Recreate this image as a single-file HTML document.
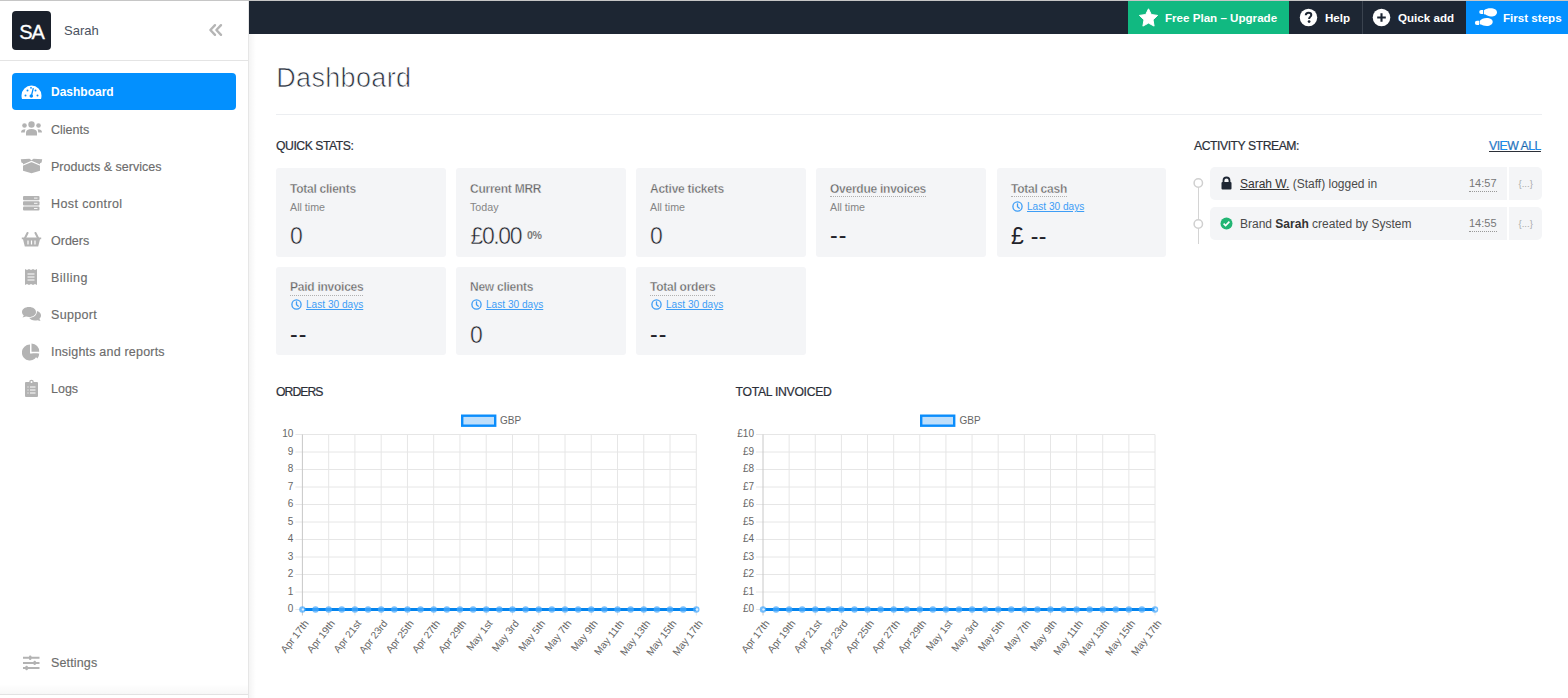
<!DOCTYPE html>
<html><head><meta charset="utf-8">
<style>
*{box-sizing:border-box;margin:0;padding:0}
html,body{width:1568px;height:698px;overflow:hidden;background:#fff;font-family:"Liberation Sans",sans-serif;color:#333}
.abs{position:absolute}
.t{position:absolute;white-space:nowrap;line-height:1}
#topline{position:absolute;left:0;top:0;width:1568px;height:1px;background:#c6c6c6}
#side{position:absolute;left:0;top:1px;width:249px;height:697px;background:#fff;border-right:1px solid #e6e6e6}
#sidebot{position:absolute;left:0;top:684px;width:248px;height:11px;background:linear-gradient(to bottom,rgba(0,0,0,0),rgba(0,0,0,.03));border-bottom:1px solid #e2e2e2}
#shadow{position:absolute;left:249px;top:34px;width:7px;height:664px;background:linear-gradient(to right,rgba(0,0,0,.045),rgba(0,0,0,0))}
#avatar{position:absolute;left:12px;top:11px;width:39px;height:39px;background:#1a202b;border-radius:4px}
.nav{position:absolute;left:12px;width:224px;height:37px}
.nav.active{background:#0390fe;border-radius:4px}
.navt{font-size:12.5px;color:#6c6c6c;-webkit-text-stroke:0.15px #6c6c6c}
.tbt{font-size:11.6px;font-weight:bold;color:#fff;margin-top:-0.5px}
.sec{font-size:12.2px;letter-spacing:-0.45px;color:#2b2f38;-webkit-text-stroke:0.2px #2b2f38}
.card{position:absolute;width:170px;height:88.5px;background:#f4f5f7;border-radius:3px}
.ct{font-size:12px;font-weight:bold;letter-spacing:-0.25px;color:#666;-webkit-text-stroke:0.35px #f4f5f7}
.cs{font-size:10.7px;color:#858585}
.cv{font-size:23px;color:#1f232b;-webkit-text-stroke:0.45px #f4f5f7}
.lnk{font-size:10.1px;color:#3d9df6;text-decoration:underline;margin-top:1px}
.dot{border-bottom:1px dotted #b0b0b0;padding-bottom:1.5px}
.act{position:absolute;left:1210px;width:297px;height:33px;background:#f4f5f7;border-radius:5px 0 0 5px}
.actb{position:absolute;left:1509px;width:33px;height:33px;background:#f4f5f7;border-radius:0 5px 5px 0}
.at{font-size:12px;color:#4a4a4a}
svg text{font-family:"Liberation Sans",sans-serif}
.yl{font-size:10px;fill:#666}
.xl{font-size:10.2px;fill:#666}
.lg{font-size:10px;fill:#666}
</style></head><body>
<div id="topline"></div>
<div id="side"></div>
<div id="sidebot"></div>
<div id="shadow"></div>
<div id="avatar"></div>
<div class="t" style="left:19.3px;top:21.7px;font-size:20px;letter-spacing:-1.2px;color:#fff;-webkit-text-stroke:0.3px #fff">SA</div>
<div class="t" style="left:64px;top:24px;font-size:13px;color:#4a5260">Sarah</div>
<svg class="abs" style="left:207px;top:23px" width="18" height="14" viewBox="0 0 18 14"><path d="M8 2.2L3.4 7L8 11.8M14 2.2L9.4 7L14 11.8" fill="none" stroke="#b5b5b5" stroke-width="2.4" stroke-linecap="round" stroke-linejoin="round"/></svg>
<div class="abs" style="left:0;top:60px;width:248px;height:1px;background:#e4e4e4"></div>

<div class="nav active" style="top:73px"></div>
<svg class="abs" style="left:21px;top:84px" width="21" height="16" viewBox="0 0 21 16"><path d="M1 15C0.6 13.8 0.5 12.6 0.5 11.5A10 10 0 0 1 20.5 11.5C20.5 12.6 20.4 13.8 20 15Z" fill="#fff"/><circle cx="4.5" cy="11.5" r="1" fill="#0390fe"/><circle cx="16.5" cy="11.5" r="1" fill="#0390fe"/><circle cx="6.5" cy="6.5" r="1" fill="#0390fe"/><circle cx="14.5" cy="6.5" r="1" fill="#0390fe"/><circle cx="10" cy="3.8" r="0.9" fill="#0390fe"/><path d="M12.3 4.2L10.6 10.8" stroke="#0390fe" stroke-width="1.3"/><circle cx="10.3" cy="12" r="1.8" fill="#0390fe"/></svg>
<div class="t" style="left:51px;top:86px;font-size:12px;font-weight:bold;color:#fff">Dashboard</div>

<svg class="abs" style="left:20px;top:121px" width="23" height="15" viewBox="0 0 23 15"><circle cx="11.5" cy="3.5" r="3.2" fill="#b3b3b3"/><circle cx="4.5" cy="4.5" r="2.3" fill="#b3b3b3"/><circle cx="18.5" cy="4.5" r="2.3" fill="#b3b3b3"/><path d="M6 14.5V11.5C6 9.3 8 8 11.5 8S17 9.3 17 11.5V14.5Z" fill="#b3b3b3"/><path d="M1 11.5C1 9.5 2.5 8.3 5.5 8.3C5 9.3 4.8 10.2 4.8 11.5Z" fill="#b3b3b3"/><path d="M22 11.5C22 9.5 20.5 8.3 17.5 8.3C18 9.3 18.2 10.2 18.2 11.5Z" fill="#b3b3b3"/></svg>
<div class="t navt" style="left:51px;top:124px">Clients</div>

<svg class="abs" style="left:20px;top:158px" width="23" height="16" viewBox="0 0 23 16"><path d="M0.8 1.2L9.5 0.8L11.5 2.2L13.5 0.8L22.2 1.2L21.6 4.6L20 5.2V12.8L11.5 15.2L3 12.8V5.2L1.4 4.6Z" fill="#b3b3b3"/><path d="M2.6 7.2L11.5 3.4L20.4 7.2" fill="none" stroke="#fff" stroke-width="1.1"/></svg>
<div class="t navt" style="left:51px;top:161px">Products &amp; services</div>

<svg class="abs" style="left:22px;top:195px" width="19" height="17" viewBox="0 0 19 17"><rect x="1" y="1" width="16.5" height="4.2" rx="1" fill="#b3b3b3"/><rect x="1" y="6.2" width="16.5" height="4.2" rx="1" fill="#b3b3b3"/><rect x="1" y="11.4" width="16.5" height="4.2" rx="1" fill="#b3b3b3"/><path d="M12 3.1H15.5M12 8.3H15.5M12 13.5H15.5" stroke="#fff" stroke-width="0.9"/></svg>
<div class="t navt" style="left:51px;top:198px;letter-spacing:0.4px">Host control</div>

<svg class="abs" style="left:21px;top:232px" width="21" height="16" viewBox="0 0 21 16"><path d="M6.5 1L4 6M14.5 1L17 6" stroke="#b3b3b3" stroke-width="2" stroke-linecap="round"/><path d="M0.8 5.5H20.2V7.3H19L17.2 14.5H3.8L2 7.3H0.8Z" fill="#b3b3b3"/><path d="M7 8.5V12.5M10.5 8.5V12.5M14 8.5V12.5" stroke="#fff" stroke-width="1.2"/></svg>
<div class="t navt" style="left:51px;top:235px">Orders</div>

<svg class="abs" style="left:24px;top:268px" width="15" height="18" viewBox="0 0 15 18"><path d="M1 1L3 2L5 1L7 2L9 1L11 2L13 1V17L11 16L9 17L7 16L5 17L3 16L1 17Z" fill="#b3b3b3"/><path d="M3.5 6H10.5M3.5 9H10.5M3.5 12H10.5" stroke="#fff" stroke-width="1.2"/></svg>
<div class="t navt" style="left:51px;top:272px;letter-spacing:0.5px">Billing</div>

<svg class="abs" style="left:21px;top:306px" width="21" height="17" viewBox="0 0 21 17"><path d="M8 1C3.8 1 1 3.2 1 6C1 7.4 1.7 8.5 2.8 9.4L1.5 11.5L5 10.6C5.9 10.9 6.9 11 8 11C12.2 11 15 8.8 15 6S12.2 1 8 1Z" fill="#b3b3b3"/><path d="M16 5C18.6 5.8 20 7.5 20 9.5C20 10.8 19.4 11.9 18.4 12.7L19.5 15L16.4 14.2C15.6 14.4 14.8 14.5 14 14.5C11.2 14.5 9 13.3 8.2 11.8C12.8 11.7 16.1 9.2 16 5Z" fill="#b3b3b3"/></svg>
<div class="t navt" style="left:51px;top:309px;letter-spacing:0.33px">Support</div>

<svg class="abs" style="left:22px;top:343px" width="19" height="18" viewBox="0 0 19 18"><path d="M8 1.5A8 8 0 1 0 15.8 10.6H8Z" fill="#b3b3b3"/><path d="M9.5 0.5A7.8 7.8 0 0 1 17.2 8.8H9.5Z" fill="#b3b3b3"/><path d="M10.2 10.4H17.2A7.5 7.5 0 0 1 15.4 15.5Z" fill="#b3b3b3"/></svg>
<div class="t navt" style="left:51px;top:346px;letter-spacing:0.2px">Insights and reports</div>

<svg class="abs" style="left:24px;top:379px" width="15" height="19" viewBox="0 0 15 19"><path d="M2 3H5.2A2.3 2.3 0 0 1 9.8 3H13A1 1 0 0 1 14 4V17A1 1 0 0 1 13 18H2A1 1 0 0 1 1 17V4A1 1 0 0 1 2 3Z" fill="#b3b3b3"/><circle cx="7.5" cy="3" r="1" fill="#fff"/><path d="M3.5 8H4.5M6 8H11.5M3.5 11H4.5M6 11H11.5M3.5 14H4.5M6 14H11.5" stroke="#fff" stroke-width="1.2"/></svg>
<div class="t navt" style="left:51px;top:383px">Logs</div>

<svg class="abs" style="left:22px;top:655px" width="19" height="16" viewBox="0 0 19 16"><path d="M1 2.7H17.5M1 7.9H17.5M1 13H17.5" stroke="#b3b3b3" stroke-width="2"/><rect x="7" y="0.5" width="2.4" height="4.4" rx="1" fill="#b3b3b3"/><rect x="11.5" y="5.7" width="2.4" height="4.4" rx="1" fill="#b3b3b3"/><rect x="3.4" y="10.8" width="2.4" height="4.4" rx="1" fill="#b3b3b3"/></svg>
<div class="t navt" style="left:51px;top:657px;letter-spacing:0.15px">Settings</div>

<div class="abs" style="left:249px;top:1px;width:1319px;height:33px;background:#1d2633"></div>
<div class="abs" style="left:1128px;top:1px;width:161px;height:33px;background:#11b981"></div>
<svg class="abs" style="left:1138px;top:8px" width="21" height="20" viewBox="0 0 21 20"><path d="M10.5 0.8L13.3 6.5L19.6 7.4L15 11.8L16.1 18.1L10.5 15.1L4.9 18.1L6 11.8L1.4 7.4L7.7 6.5Z" fill="#fff" stroke="#fff" stroke-width="1" stroke-linejoin="round"/></svg>
<div class="t tbt" style="left:1165px;top:12px">Free Plan – Upgrade</div>
<svg class="abs" style="left:1299px;top:8px" width="19" height="19" viewBox="0 0 19 19"><circle cx="9.5" cy="9.5" r="8.7" fill="#fff"/><path d="M6.8 7.3C6.8 5.7 8 4.7 9.6 4.7C11.2 4.7 12.3 5.7 12.3 7C12.3 8.8 10.1 9 10.1 10.9" fill="none" stroke="#1d2633" stroke-width="2"/><circle cx="10.1" cy="13.6" r="1.4" fill="#1d2633"/></svg>
<div class="t tbt" style="left:1325px;top:12px">Help</div>
<div class="abs" style="left:1362px;top:1px;width:1px;height:33px;background:#3a434f"></div>
<svg class="abs" style="left:1372px;top:8px" width="19" height="19" viewBox="0 0 19 19"><circle cx="9.5" cy="9.5" r="8.8" fill="#fff"/><path d="M9.5 5.2V13.8M5.2 9.5H13.8" stroke="#1d2633" stroke-width="2.1"/></svg>
<div class="t tbt" style="left:1398px;top:12px">Quick add</div>
<div class="abs" style="left:1466px;top:1px;width:102px;height:33px;background:#0390fe"></div>
<svg class="abs" style="left:1474px;top:7px" width="24" height="20" viewBox="0 0 24 20"><path d="M9.2 3.1V7.1H7.2A2 2 0 0 1 7.2 3.1Z" fill="#fff"/><path d="M10 3.2C12 1.8 14 1.2 16.5 1.2C20.5 1.2 23 2.8 23 5.2C23 7.8 20.5 9.6 17 9.6C14.5 9.6 13 8.5 11.5 7.6L10 7.3Z" fill="#fff"/><path d="M5 13.8V18H3A2.1 2.1 0 0 1 3 13.8Z" fill="#fff"/><path d="M5.6 14C7.3 12 9.5 10.9 12.5 10.9C16.5 10.9 18.7 12.6 18.7 14.8C18.7 17.3 16.2 19 12.8 19C9.8 19 8.5 18.2 7 17.6L5.6 17.2Z" fill="#fff"/></svg>
<div class="t tbt" style="left:1503px;top:12px">First steps</div>

<div class="t" style="left:276.2px;top:64.9px;font-size:27px;letter-spacing:0.35px;color:#2d3340;-webkit-text-stroke:0.7px #fff">Dashboard</div>
<div class="abs" style="left:276px;top:114px;width:1266px;height:1px;background:#eceef1"></div>
<div class="t sec" style="left:276px;top:139.5px">QUICK STATS:</div>

<div class="card" style="left:276px;top:168px"></div>
<div class="card" style="left:456px;top:168px"></div>
<div class="card" style="left:636px;top:168px"></div>
<div class="card" style="left:816px;top:168px"></div>
<div class="card" style="left:997px;top:168px;width:169px"></div>
<div class="card" style="left:276px;top:266.5px"></div>
<div class="card" style="left:456px;top:266.5px"></div>
<div class="card" style="left:636px;top:266.5px"></div>

<div class="t ct" style="left:290px;top:182.6px">Total clients</div>
<div class="t cs" style="left:290px;top:202px">All time</div>
<div class="t cv" style="left:290px;top:225.2px">0</div>

<div class="t ct" style="left:470px;top:182.6px">Current MRR</div>
<div class="t cs" style="left:470px;top:202px">Today</div>
<div class="t cv" style="left:470.5px;top:225.2px;letter-spacing:-1.4px">£0.00</div>
<div class="t" style="left:527px;top:230px;font-size:10.6px;font-weight:bold;letter-spacing:-0.5px;color:#7a7a7a">0%</div>

<div class="t ct" style="left:650px;top:182.6px">Active tickets</div>
<div class="t cs" style="left:650px;top:202px">All time</div>
<div class="t cv" style="left:650px;top:225.2px">0</div>

<div class="t ct dot" style="left:830px;top:182.6px">Overdue invoices</div>
<div class="t cs" style="left:830px;top:202px">All time</div>
<div class="t cv" style="left:830px;top:223.7px;letter-spacing:1.2px;-webkit-text-stroke:0">--</div>

<div class="t ct dot" style="left:1011px;top:182.6px">Total cash</div>
<svg class="abs" style="left:1011.5px;top:201px" width="11" height="11" viewBox="0 0 11 11"><circle cx="5.5" cy="5.5" r="4.6" fill="none" stroke="#3d9df6" stroke-width="1.3"/><path d="M5.5 2.8V5.7L7.3 7.2" fill="none" stroke="#3d9df6" stroke-width="1.3" stroke-linecap="round"/></svg>
<div class="t lnk" style="left:1027px;top:201px">Last 30 days</div>
<div class="t cv" style="left:1011px;top:225.2px;letter-spacing:0.3px;-webkit-text-stroke:0">£ --</div>

<div class="t ct dot" style="left:290px;top:281.3px">Paid invoices</div>
<svg class="abs" style="left:290.5px;top:299px" width="11" height="11" viewBox="0 0 11 11"><circle cx="5.5" cy="5.5" r="4.6" fill="none" stroke="#3d9df6" stroke-width="1.3"/><path d="M5.5 2.8V5.7L7.3 7.2" fill="none" stroke="#3d9df6" stroke-width="1.3" stroke-linecap="round"/></svg>
<div class="t lnk" style="left:306px;top:299px">Last 30 days</div>
<div class="t cv" style="left:290px;top:323.3px;letter-spacing:1.2px;-webkit-text-stroke:0">--</div>

<div class="t ct" style="left:470px;top:281.3px">New clients</div>
<svg class="abs" style="left:470.5px;top:299px" width="11" height="11" viewBox="0 0 11 11"><circle cx="5.5" cy="5.5" r="4.6" fill="none" stroke="#3d9df6" stroke-width="1.3"/><path d="M5.5 2.8V5.7L7.3 7.2" fill="none" stroke="#3d9df6" stroke-width="1.3" stroke-linecap="round"/></svg>
<div class="t lnk" style="left:486px;top:299px">Last 30 days</div>
<div class="t cv" style="left:470px;top:324.3px">0</div>

<div class="t ct dot" style="left:650px;top:281.3px">Total orders</div>
<svg class="abs" style="left:650.5px;top:299px" width="11" height="11" viewBox="0 0 11 11"><circle cx="5.5" cy="5.5" r="4.6" fill="none" stroke="#3d9df6" stroke-width="1.3"/><path d="M5.5 2.8V5.7L7.3 7.2" fill="none" stroke="#3d9df6" stroke-width="1.3" stroke-linecap="round"/></svg>
<div class="t lnk" style="left:666px;top:299px">Last 30 days</div>
<div class="t cv" style="left:650px;top:323.3px;letter-spacing:1.2px;-webkit-text-stroke:0">--</div>

<div class="t sec" style="left:1194px;top:139.5px">ACTIVITY STREAM:</div>
<div class="t sec" style="left:1489px;top:139.5px;color:#1a8ff5;text-decoration:underline">VIEW ALL</div>
<div class="abs" style="left:1197.5px;top:187px;width:1.5px;height:57px;background:#d4d4d4"></div>
<div class="act" style="top:167px"></div><div class="actb" style="top:167px"></div>
<div class="act" style="top:207px"></div><div class="actb" style="top:207px"></div>
<svg class="abs" style="left:1192px;top:177px" width="13" height="13"><circle cx="6.3" cy="6" r="4.2" fill="#fff" stroke="#d0d0d0" stroke-width="1.5"/></svg>
<svg class="abs" style="left:1192px;top:218px" width="13" height="13"><circle cx="6.3" cy="6" r="4.2" fill="#fff" stroke="#d0d0d0" stroke-width="1.5"/></svg>
<svg class="abs" style="left:1220px;top:176px" width="13" height="14" viewBox="0 0 13 14"><path d="M3.5 6V4.5A3 3 0 0 1 9.5 4.5V6" fill="none" stroke="#1d2633" stroke-width="1.8"/><rect x="1.5" y="6" width="10" height="7.5" rx="1" fill="#1d2633"/></svg>
<div class="t at" style="left:1240px;top:178px"><span style="text-decoration:underline;color:#333">Sarah W.</span> (Staff) logged in</div>
<div class="t at" style="left:1469px;top:178px;font-size:11px;color:#777;border-bottom:1px dotted #999;padding-bottom:2px">14:57</div>
<div class="t" style="left:1518.5px;top:178.5px;font-size:9.6px;color:#ababab">{...}</div>
<svg class="abs" style="left:1220px;top:217px" width="13" height="13" viewBox="0 0 13 13"><circle cx="6.5" cy="6.5" r="6" fill="#22b573"/><path d="M3.6 6.6L5.6 8.6L9.4 4.6" fill="none" stroke="#fff" stroke-width="1.6"/></svg>
<div class="t at" style="left:1240px;top:218px">Brand <b style="color:#333">Sarah</b> created by System</div>
<div class="t at" style="left:1469px;top:218px;font-size:11px;color:#777;border-bottom:1px dotted #999;padding-bottom:2px">14:55</div>
<div class="t" style="left:1518.5px;top:218.5px;font-size:9.6px;color:#ababab">{...}</div>

<div class="t sec" style="left:276px;top:386px;letter-spacing:-0.95px">ORDERS</div>
<div class="t sec" style="left:735.5px;top:386px;letter-spacing:-0.28px">TOTAL INVOICED</div>
<svg class="abs" style="left:0;top:0" width="1568" height="698">
<line x1="295.40" y1="434.50" x2="696.30" y2="434.50" stroke="#e6e6e6" stroke-width="1"/>
<line x1="295.40" y1="452.00" x2="696.30" y2="452.00" stroke="#e6e6e6" stroke-width="1"/>
<line x1="295.40" y1="469.50" x2="696.30" y2="469.50" stroke="#e6e6e6" stroke-width="1"/>
<line x1="295.40" y1="487.00" x2="696.30" y2="487.00" stroke="#e6e6e6" stroke-width="1"/>
<line x1="295.40" y1="504.50" x2="696.30" y2="504.50" stroke="#e6e6e6" stroke-width="1"/>
<line x1="295.40" y1="522.00" x2="696.30" y2="522.00" stroke="#e6e6e6" stroke-width="1"/>
<line x1="295.40" y1="539.50" x2="696.30" y2="539.50" stroke="#e6e6e6" stroke-width="1"/>
<line x1="295.40" y1="557.00" x2="696.30" y2="557.00" stroke="#e6e6e6" stroke-width="1"/>
<line x1="295.40" y1="574.50" x2="696.30" y2="574.50" stroke="#e6e6e6" stroke-width="1"/>
<line x1="295.40" y1="592.00" x2="696.30" y2="592.00" stroke="#e6e6e6" stroke-width="1"/>
<line x1="295.40" y1="609.50" x2="696.30" y2="609.50" stroke="#e6e6e6" stroke-width="1"/>
<line x1="302.40" y1="434.50" x2="302.40" y2="615.50" stroke="#c8c8c8" stroke-width="1"/>
<line x1="328.66" y1="434.50" x2="328.66" y2="615.50" stroke="#e6e6e6" stroke-width="1"/>
<line x1="354.92" y1="434.50" x2="354.92" y2="615.50" stroke="#e6e6e6" stroke-width="1"/>
<line x1="381.18" y1="434.50" x2="381.18" y2="615.50" stroke="#e6e6e6" stroke-width="1"/>
<line x1="407.44" y1="434.50" x2="407.44" y2="615.50" stroke="#e6e6e6" stroke-width="1"/>
<line x1="433.70" y1="434.50" x2="433.70" y2="615.50" stroke="#e6e6e6" stroke-width="1"/>
<line x1="459.96" y1="434.50" x2="459.96" y2="615.50" stroke="#e6e6e6" stroke-width="1"/>
<line x1="486.22" y1="434.50" x2="486.22" y2="615.50" stroke="#e6e6e6" stroke-width="1"/>
<line x1="512.48" y1="434.50" x2="512.48" y2="615.50" stroke="#e6e6e6" stroke-width="1"/>
<line x1="538.74" y1="434.50" x2="538.74" y2="615.50" stroke="#e6e6e6" stroke-width="1"/>
<line x1="565.00" y1="434.50" x2="565.00" y2="615.50" stroke="#e6e6e6" stroke-width="1"/>
<line x1="591.26" y1="434.50" x2="591.26" y2="615.50" stroke="#e6e6e6" stroke-width="1"/>
<line x1="617.52" y1="434.50" x2="617.52" y2="615.50" stroke="#e6e6e6" stroke-width="1"/>
<line x1="643.78" y1="434.50" x2="643.78" y2="615.50" stroke="#e6e6e6" stroke-width="1"/>
<line x1="670.04" y1="434.50" x2="670.04" y2="615.50" stroke="#e6e6e6" stroke-width="1"/>
<line x1="696.30" y1="434.50" x2="696.30" y2="615.50" stroke="#e6e6e6" stroke-width="1"/>
<text x="293.40" y="437.20" text-anchor="end" class="yl">10</text>
<text x="293.40" y="454.70" text-anchor="end" class="yl">9</text>
<text x="293.40" y="472.20" text-anchor="end" class="yl">8</text>
<text x="293.40" y="489.70" text-anchor="end" class="yl">7</text>
<text x="293.40" y="507.20" text-anchor="end" class="yl">6</text>
<text x="293.40" y="524.70" text-anchor="end" class="yl">5</text>
<text x="293.40" y="542.20" text-anchor="end" class="yl">4</text>
<text x="293.40" y="559.70" text-anchor="end" class="yl">3</text>
<text x="293.40" y="577.20" text-anchor="end" class="yl">2</text>
<text x="293.40" y="594.70" text-anchor="end" class="yl">1</text>
<text x="293.40" y="612.20" text-anchor="end" class="yl">0</text>
<line x1="302.40" y1="609.50" x2="696.30" y2="609.50" stroke="#0384ee" stroke-width="2.8"/>
<circle cx="302.40" cy="609.50" r="3.2" fill="#4aa9fc" fill-opacity="0.75"/>
<circle cx="303.00" cy="609.50" r="1.3" fill="#dff0ff"/>
<circle cx="315.53" cy="609.50" r="3.2" fill="#4aa9fc" fill-opacity="0.75"/>
<circle cx="328.66" cy="609.50" r="3.2" fill="#4aa9fc" fill-opacity="0.75"/>
<circle cx="341.79" cy="609.50" r="3.2" fill="#4aa9fc" fill-opacity="0.75"/>
<circle cx="354.92" cy="609.50" r="3.2" fill="#4aa9fc" fill-opacity="0.75"/>
<circle cx="368.05" cy="609.50" r="3.2" fill="#4aa9fc" fill-opacity="0.75"/>
<circle cx="381.18" cy="609.50" r="3.2" fill="#4aa9fc" fill-opacity="0.75"/>
<circle cx="394.31" cy="609.50" r="3.2" fill="#4aa9fc" fill-opacity="0.75"/>
<circle cx="407.44" cy="609.50" r="3.2" fill="#4aa9fc" fill-opacity="0.75"/>
<circle cx="420.57" cy="609.50" r="3.2" fill="#4aa9fc" fill-opacity="0.75"/>
<circle cx="433.70" cy="609.50" r="3.2" fill="#4aa9fc" fill-opacity="0.75"/>
<circle cx="446.83" cy="609.50" r="3.2" fill="#4aa9fc" fill-opacity="0.75"/>
<circle cx="459.96" cy="609.50" r="3.2" fill="#4aa9fc" fill-opacity="0.75"/>
<circle cx="473.09" cy="609.50" r="3.2" fill="#4aa9fc" fill-opacity="0.75"/>
<circle cx="486.22" cy="609.50" r="3.2" fill="#4aa9fc" fill-opacity="0.75"/>
<circle cx="499.35" cy="609.50" r="3.2" fill="#4aa9fc" fill-opacity="0.75"/>
<circle cx="512.48" cy="609.50" r="3.2" fill="#4aa9fc" fill-opacity="0.75"/>
<circle cx="525.61" cy="609.50" r="3.2" fill="#4aa9fc" fill-opacity="0.75"/>
<circle cx="538.74" cy="609.50" r="3.2" fill="#4aa9fc" fill-opacity="0.75"/>
<circle cx="551.87" cy="609.50" r="3.2" fill="#4aa9fc" fill-opacity="0.75"/>
<circle cx="565.00" cy="609.50" r="3.2" fill="#4aa9fc" fill-opacity="0.75"/>
<circle cx="578.13" cy="609.50" r="3.2" fill="#4aa9fc" fill-opacity="0.75"/>
<circle cx="591.26" cy="609.50" r="3.2" fill="#4aa9fc" fill-opacity="0.75"/>
<circle cx="604.39" cy="609.50" r="3.2" fill="#4aa9fc" fill-opacity="0.75"/>
<circle cx="617.52" cy="609.50" r="3.2" fill="#4aa9fc" fill-opacity="0.75"/>
<circle cx="630.65" cy="609.50" r="3.2" fill="#4aa9fc" fill-opacity="0.75"/>
<circle cx="643.78" cy="609.50" r="3.2" fill="#4aa9fc" fill-opacity="0.75"/>
<circle cx="656.91" cy="609.50" r="3.2" fill="#4aa9fc" fill-opacity="0.75"/>
<circle cx="670.04" cy="609.50" r="3.2" fill="#4aa9fc" fill-opacity="0.75"/>
<circle cx="683.17" cy="609.50" r="3.2" fill="#4aa9fc" fill-opacity="0.75"/>
<circle cx="696.30" cy="609.50" r="3.2" fill="#4aa9fc" fill-opacity="0.75"/>
<circle cx="696.90" cy="609.50" r="1.3" fill="#dff0ff"/>
<text transform="translate(309.30,623.50) rotate(-52)" text-anchor="end" class="xl">Apr 17th</text>
<text transform="translate(335.56,623.50) rotate(-52)" text-anchor="end" class="xl">Apr 19th</text>
<text transform="translate(361.82,623.50) rotate(-52)" text-anchor="end" class="xl">Apr 21st</text>
<text transform="translate(388.08,623.50) rotate(-52)" text-anchor="end" class="xl">Apr 23rd</text>
<text transform="translate(414.34,623.50) rotate(-52)" text-anchor="end" class="xl">Apr 25th</text>
<text transform="translate(440.60,623.50) rotate(-52)" text-anchor="end" class="xl">Apr 27th</text>
<text transform="translate(466.86,623.50) rotate(-52)" text-anchor="end" class="xl">Apr 29th</text>
<text transform="translate(493.12,623.50) rotate(-52)" text-anchor="end" class="xl">May 1st</text>
<text transform="translate(519.38,623.50) rotate(-52)" text-anchor="end" class="xl">May 3rd</text>
<text transform="translate(545.64,623.50) rotate(-52)" text-anchor="end" class="xl">May 5th</text>
<text transform="translate(571.90,623.50) rotate(-52)" text-anchor="end" class="xl">May 7th</text>
<text transform="translate(598.16,623.50) rotate(-52)" text-anchor="end" class="xl">May 9th</text>
<text transform="translate(624.42,623.50) rotate(-52)" text-anchor="end" class="xl">May 11th</text>
<text transform="translate(650.68,623.50) rotate(-52)" text-anchor="end" class="xl">May 13th</text>
<text transform="translate(676.94,623.50) rotate(-52)" text-anchor="end" class="xl">May 15th</text>
<text transform="translate(703.20,623.50) rotate(-52)" text-anchor="end" class="xl">May 17th</text>
<rect x="462.20" y="415.7" width="33" height="10" fill="#bfdffb" stroke="#0a8dfc" stroke-width="2.4"/>
<text x="500.00" y="424.4" class="lg">GBP</text>
<line x1="756.00" y1="434.50" x2="1155.00" y2="434.50" stroke="#e6e6e6" stroke-width="1"/>
<line x1="756.00" y1="452.00" x2="1155.00" y2="452.00" stroke="#e6e6e6" stroke-width="1"/>
<line x1="756.00" y1="469.50" x2="1155.00" y2="469.50" stroke="#e6e6e6" stroke-width="1"/>
<line x1="756.00" y1="487.00" x2="1155.00" y2="487.00" stroke="#e6e6e6" stroke-width="1"/>
<line x1="756.00" y1="504.50" x2="1155.00" y2="504.50" stroke="#e6e6e6" stroke-width="1"/>
<line x1="756.00" y1="522.00" x2="1155.00" y2="522.00" stroke="#e6e6e6" stroke-width="1"/>
<line x1="756.00" y1="539.50" x2="1155.00" y2="539.50" stroke="#e6e6e6" stroke-width="1"/>
<line x1="756.00" y1="557.00" x2="1155.00" y2="557.00" stroke="#e6e6e6" stroke-width="1"/>
<line x1="756.00" y1="574.50" x2="1155.00" y2="574.50" stroke="#e6e6e6" stroke-width="1"/>
<line x1="756.00" y1="592.00" x2="1155.00" y2="592.00" stroke="#e6e6e6" stroke-width="1"/>
<line x1="756.00" y1="609.50" x2="1155.00" y2="609.50" stroke="#e6e6e6" stroke-width="1"/>
<line x1="763.00" y1="434.50" x2="763.00" y2="615.50" stroke="#c8c8c8" stroke-width="1"/>
<line x1="789.13" y1="434.50" x2="789.13" y2="615.50" stroke="#e6e6e6" stroke-width="1"/>
<line x1="815.27" y1="434.50" x2="815.27" y2="615.50" stroke="#e6e6e6" stroke-width="1"/>
<line x1="841.40" y1="434.50" x2="841.40" y2="615.50" stroke="#e6e6e6" stroke-width="1"/>
<line x1="867.53" y1="434.50" x2="867.53" y2="615.50" stroke="#e6e6e6" stroke-width="1"/>
<line x1="893.67" y1="434.50" x2="893.67" y2="615.50" stroke="#e6e6e6" stroke-width="1"/>
<line x1="919.80" y1="434.50" x2="919.80" y2="615.50" stroke="#e6e6e6" stroke-width="1"/>
<line x1="945.93" y1="434.50" x2="945.93" y2="615.50" stroke="#e6e6e6" stroke-width="1"/>
<line x1="972.07" y1="434.50" x2="972.07" y2="615.50" stroke="#e6e6e6" stroke-width="1"/>
<line x1="998.20" y1="434.50" x2="998.20" y2="615.50" stroke="#e6e6e6" stroke-width="1"/>
<line x1="1024.33" y1="434.50" x2="1024.33" y2="615.50" stroke="#e6e6e6" stroke-width="1"/>
<line x1="1050.47" y1="434.50" x2="1050.47" y2="615.50" stroke="#e6e6e6" stroke-width="1"/>
<line x1="1076.60" y1="434.50" x2="1076.60" y2="615.50" stroke="#e6e6e6" stroke-width="1"/>
<line x1="1102.73" y1="434.50" x2="1102.73" y2="615.50" stroke="#e6e6e6" stroke-width="1"/>
<line x1="1128.87" y1="434.50" x2="1128.87" y2="615.50" stroke="#e6e6e6" stroke-width="1"/>
<line x1="1155.00" y1="434.50" x2="1155.00" y2="615.50" stroke="#e6e6e6" stroke-width="1"/>
<text x="754.00" y="437.20" text-anchor="end" class="yl">£10</text>
<text x="754.00" y="454.70" text-anchor="end" class="yl">£9</text>
<text x="754.00" y="472.20" text-anchor="end" class="yl">£8</text>
<text x="754.00" y="489.70" text-anchor="end" class="yl">£7</text>
<text x="754.00" y="507.20" text-anchor="end" class="yl">£6</text>
<text x="754.00" y="524.70" text-anchor="end" class="yl">£5</text>
<text x="754.00" y="542.20" text-anchor="end" class="yl">£4</text>
<text x="754.00" y="559.70" text-anchor="end" class="yl">£3</text>
<text x="754.00" y="577.20" text-anchor="end" class="yl">£2</text>
<text x="754.00" y="594.70" text-anchor="end" class="yl">£1</text>
<text x="754.00" y="612.20" text-anchor="end" class="yl">£0</text>
<line x1="763.00" y1="609.50" x2="1155.00" y2="609.50" stroke="#0384ee" stroke-width="2.8"/>
<circle cx="763.00" cy="609.50" r="3.2" fill="#4aa9fc" fill-opacity="0.75"/>
<circle cx="763.60" cy="609.50" r="1.3" fill="#dff0ff"/>
<circle cx="776.07" cy="609.50" r="3.2" fill="#4aa9fc" fill-opacity="0.75"/>
<circle cx="789.13" cy="609.50" r="3.2" fill="#4aa9fc" fill-opacity="0.75"/>
<circle cx="802.20" cy="609.50" r="3.2" fill="#4aa9fc" fill-opacity="0.75"/>
<circle cx="815.27" cy="609.50" r="3.2" fill="#4aa9fc" fill-opacity="0.75"/>
<circle cx="828.33" cy="609.50" r="3.2" fill="#4aa9fc" fill-opacity="0.75"/>
<circle cx="841.40" cy="609.50" r="3.2" fill="#4aa9fc" fill-opacity="0.75"/>
<circle cx="854.47" cy="609.50" r="3.2" fill="#4aa9fc" fill-opacity="0.75"/>
<circle cx="867.53" cy="609.50" r="3.2" fill="#4aa9fc" fill-opacity="0.75"/>
<circle cx="880.60" cy="609.50" r="3.2" fill="#4aa9fc" fill-opacity="0.75"/>
<circle cx="893.67" cy="609.50" r="3.2" fill="#4aa9fc" fill-opacity="0.75"/>
<circle cx="906.73" cy="609.50" r="3.2" fill="#4aa9fc" fill-opacity="0.75"/>
<circle cx="919.80" cy="609.50" r="3.2" fill="#4aa9fc" fill-opacity="0.75"/>
<circle cx="932.87" cy="609.50" r="3.2" fill="#4aa9fc" fill-opacity="0.75"/>
<circle cx="945.93" cy="609.50" r="3.2" fill="#4aa9fc" fill-opacity="0.75"/>
<circle cx="959.00" cy="609.50" r="3.2" fill="#4aa9fc" fill-opacity="0.75"/>
<circle cx="972.07" cy="609.50" r="3.2" fill="#4aa9fc" fill-opacity="0.75"/>
<circle cx="985.13" cy="609.50" r="3.2" fill="#4aa9fc" fill-opacity="0.75"/>
<circle cx="998.20" cy="609.50" r="3.2" fill="#4aa9fc" fill-opacity="0.75"/>
<circle cx="1011.27" cy="609.50" r="3.2" fill="#4aa9fc" fill-opacity="0.75"/>
<circle cx="1024.33" cy="609.50" r="3.2" fill="#4aa9fc" fill-opacity="0.75"/>
<circle cx="1037.40" cy="609.50" r="3.2" fill="#4aa9fc" fill-opacity="0.75"/>
<circle cx="1050.47" cy="609.50" r="3.2" fill="#4aa9fc" fill-opacity="0.75"/>
<circle cx="1063.53" cy="609.50" r="3.2" fill="#4aa9fc" fill-opacity="0.75"/>
<circle cx="1076.60" cy="609.50" r="3.2" fill="#4aa9fc" fill-opacity="0.75"/>
<circle cx="1089.67" cy="609.50" r="3.2" fill="#4aa9fc" fill-opacity="0.75"/>
<circle cx="1102.73" cy="609.50" r="3.2" fill="#4aa9fc" fill-opacity="0.75"/>
<circle cx="1115.80" cy="609.50" r="3.2" fill="#4aa9fc" fill-opacity="0.75"/>
<circle cx="1128.87" cy="609.50" r="3.2" fill="#4aa9fc" fill-opacity="0.75"/>
<circle cx="1141.93" cy="609.50" r="3.2" fill="#4aa9fc" fill-opacity="0.75"/>
<circle cx="1155.00" cy="609.50" r="3.2" fill="#4aa9fc" fill-opacity="0.75"/>
<circle cx="1155.60" cy="609.50" r="1.3" fill="#dff0ff"/>
<text transform="translate(769.90,623.50) rotate(-52)" text-anchor="end" class="xl">Apr 17th</text>
<text transform="translate(796.03,623.50) rotate(-52)" text-anchor="end" class="xl">Apr 19th</text>
<text transform="translate(822.17,623.50) rotate(-52)" text-anchor="end" class="xl">Apr 21st</text>
<text transform="translate(848.30,623.50) rotate(-52)" text-anchor="end" class="xl">Apr 23rd</text>
<text transform="translate(874.43,623.50) rotate(-52)" text-anchor="end" class="xl">Apr 25th</text>
<text transform="translate(900.57,623.50) rotate(-52)" text-anchor="end" class="xl">Apr 27th</text>
<text transform="translate(926.70,623.50) rotate(-52)" text-anchor="end" class="xl">Apr 29th</text>
<text transform="translate(952.83,623.50) rotate(-52)" text-anchor="end" class="xl">May 1st</text>
<text transform="translate(978.97,623.50) rotate(-52)" text-anchor="end" class="xl">May 3rd</text>
<text transform="translate(1005.10,623.50) rotate(-52)" text-anchor="end" class="xl">May 5th</text>
<text transform="translate(1031.23,623.50) rotate(-52)" text-anchor="end" class="xl">May 7th</text>
<text transform="translate(1057.37,623.50) rotate(-52)" text-anchor="end" class="xl">May 9th</text>
<text transform="translate(1083.50,623.50) rotate(-52)" text-anchor="end" class="xl">May 11th</text>
<text transform="translate(1109.63,623.50) rotate(-52)" text-anchor="end" class="xl">May 13th</text>
<text transform="translate(1135.77,623.50) rotate(-52)" text-anchor="end" class="xl">May 15th</text>
<text transform="translate(1161.90,623.50) rotate(-52)" text-anchor="end" class="xl">May 17th</text>
<rect x="921.20" y="415.7" width="33" height="10" fill="#bfdffb" stroke="#0a8dfc" stroke-width="2.4"/>
<text x="959.50" y="424.4" class="lg">GBP</text>
</svg>
</body></html>
